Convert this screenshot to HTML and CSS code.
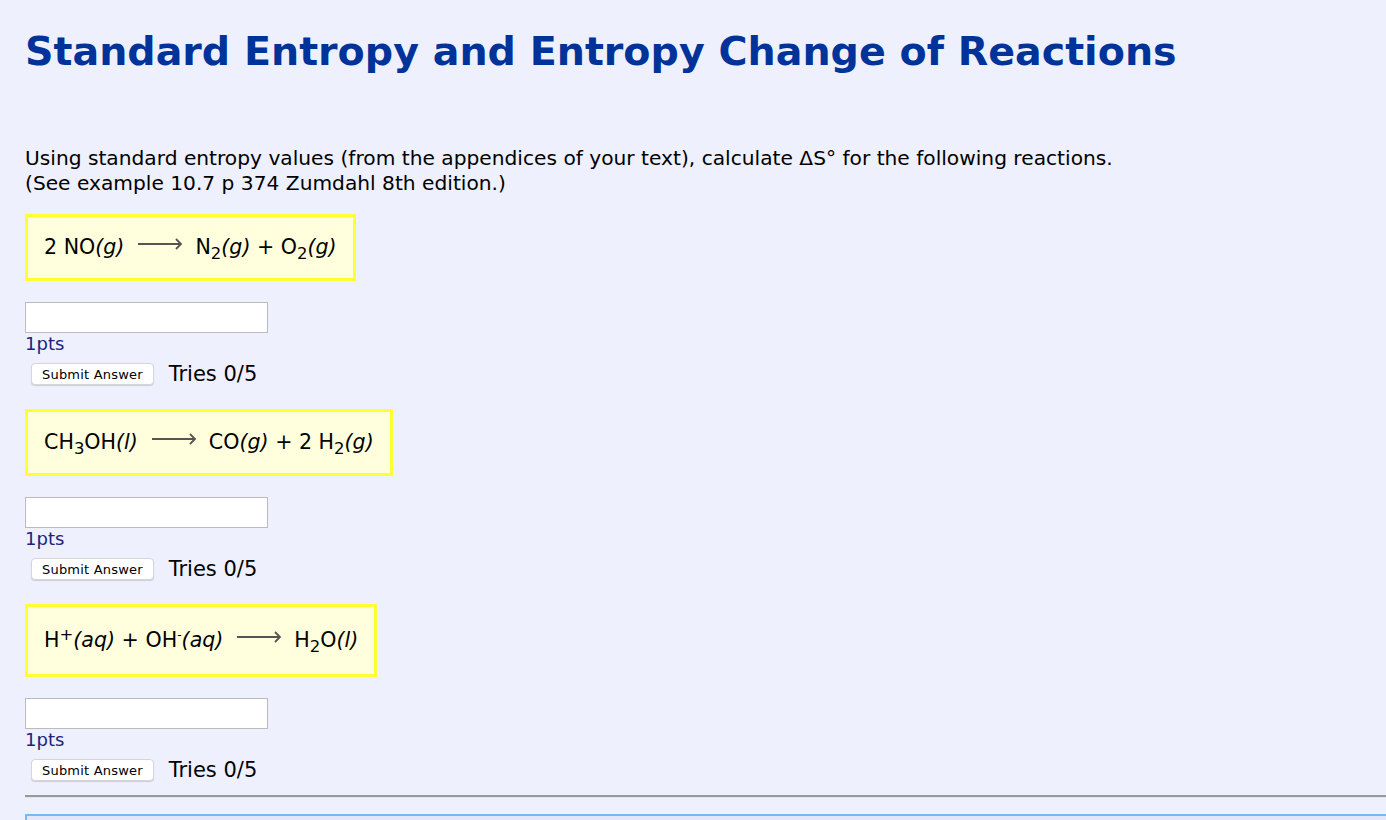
FILE: index.html
```html
<!DOCTYPE html>
<html lang="en">

<head>
  <meta charset="UTF-8">
  <title>Standard Entropy and Entropy Change of Reactions</title>
  <link rel="stylesheet" href="styles.css">
</head>

<body>
  <div class="page">
    <h1 class="title">Standard Entropy and Entropy Change of Reactions</h1>

    <p class="intro">
      Using standard entropy values (from the appendices of your text), calculate &Delta;S&deg; for the following reactions.<br>
      (See example 10.7 p 374 Zumdahl 8th edition.)
    </p>

    <!-- question 1 -->
    <div class="question">
      <div class="reaction">2 NO<i>(g)</i><svg class="arrow" width="46" height="14" viewBox="0 0 46 14"><path d="M1 7H44M39 2L44 7L39 12" fill="none" stroke="#555" stroke-width="1.8"/></svg>N<sub>2</sub><i>(g)</i> + O<sub>2</sub><i>(g)</i></div>
      <input type="text" class="answer">
      <div class="pts">1pts</div>
      <div class="submit-row">
        <button class="btn-submit">Submit Answer</button>
        <span class="tries">Tries 0/5</span>
      </div>
    </div>

    <!-- question 2 -->
    <div class="question">
      <div class="reaction">CH<sub>3</sub>OH<i>(l)</i><svg class="arrow" width="46" height="14" viewBox="0 0 46 14"><path d="M1 7H44M39 2L44 7L39 12" fill="none" stroke="#555" stroke-width="1.8"/></svg>CO<i>(g)</i> + 2 H<sub>2</sub><i>(g)</i></div>
      <input type="text" class="answer">
      <div class="pts">1pts</div>
      <div class="submit-row">
        <button class="btn-submit">Submit Answer</button>
        <span class="tries">Tries 0/5</span>
      </div>
    </div>

    <!-- question 3 -->
    <div class="question">
      <div class="reaction reaction-tall">H<sup>+</sup><i>(aq)</i> + OH<sup class="minus">-</sup><i>(aq)</i><svg class="arrow" width="46" height="14" viewBox="0 0 46 14"><path d="M1 7H44M39 2L44 7L39 12" fill="none" stroke="#555" stroke-width="1.8"/></svg>H<sub>2</sub>O<i>(l)</i></div>
      <input type="text" class="answer">
      <div class="pts">1pts</div>
      <div class="submit-row">
        <button class="btn-submit">Submit Answer</button>
        <span class="tries">Tries 0/5</span>
      </div>
    </div>

    <hr class="divider">
    <div class="next-box"></div>
  </div>
</body>

</html>
```

FILE: styles.css
```css
body {
  margin: 0;
  padding: 0;
  background: #eef0fe;
  font-family: 'DejaVu Sans', Verdana, sans-serif;
  color: #000;
  overflow: hidden;
}

.page {
  padding: 28px 0 0 25px;
}

.title {
  margin: 0;
  font-size: 39.6px;
  font-weight: bold;
  color: #003399;
  line-height: 46px;
}

.intro {
  margin: 72px 0 0 0;
  font-size: 20.2px;
  line-height: 25px;
}

.question {
  margin-top: 18px;
}

.question + .question {
  margin-top: 24px;
}

.reaction {
  display: inline-block;
  white-space: nowrap;
  background: #ffffdd;
  border: 3px solid #ffff33;
  padding: 18px 16px;
  font-size: 20.6px;
  line-height: 25px;
}

.reaction-tall {
  padding: 21px 16px;
}

.reaction sub,
.reaction sup {
  font-size: 0.8em;
  line-height: 0;
}

.reaction sub {
  vertical-align: -5px;
}

.reaction sup {
  vertical-align: 7px;
}

.reaction sup.minus {
  font-size: 0.6em;
  vertical-align: 8px;
}

.arrow {
  margin: 0 12px 0 13px;
  vertical-align: 3px;
}

.answer {
  display: block;
  margin-top: 21px;
  width: 243px;
  height: 31px;
  box-sizing: border-box;
  border: 1px solid #bbb;
  background: #fff;
}

.pts {
  color: #1a237e;
  font-size: 18px;
  line-height: 22px;
}

.submit-row {
  display: flex;
  align-items: center;
  gap: 15px;
  margin-top: 8px;
  padding-left: 6px;
  height: 22px;
}

.btn-submit {
  font-family: 'DejaVu Sans', Verdana, sans-serif;
  font-size: 13px;
  letter-spacing: 0.2px;
  height: 22px;
  padding: 0 10px;
  background: #fff;
  border: 1px solid #d6d6d6;
  border-radius: 4px;
  box-shadow: 0 1px 1px rgba(0, 0, 0, 0.15);
}

.tries {
  font-size: 21px;
  line-height: 22px;
}

.divider {
  margin: 14px 0 0 0;
  border: none;
  border-top: 2px solid #999;
  border-bottom: 1px solid #e2e3ee;
  height: 0;
}

.next-box {
  margin-top: 16px;
  height: 40px;
  background: #e4e6fb;
  border: 2px solid #7ab8f0;
  border-right: none;
}
```
